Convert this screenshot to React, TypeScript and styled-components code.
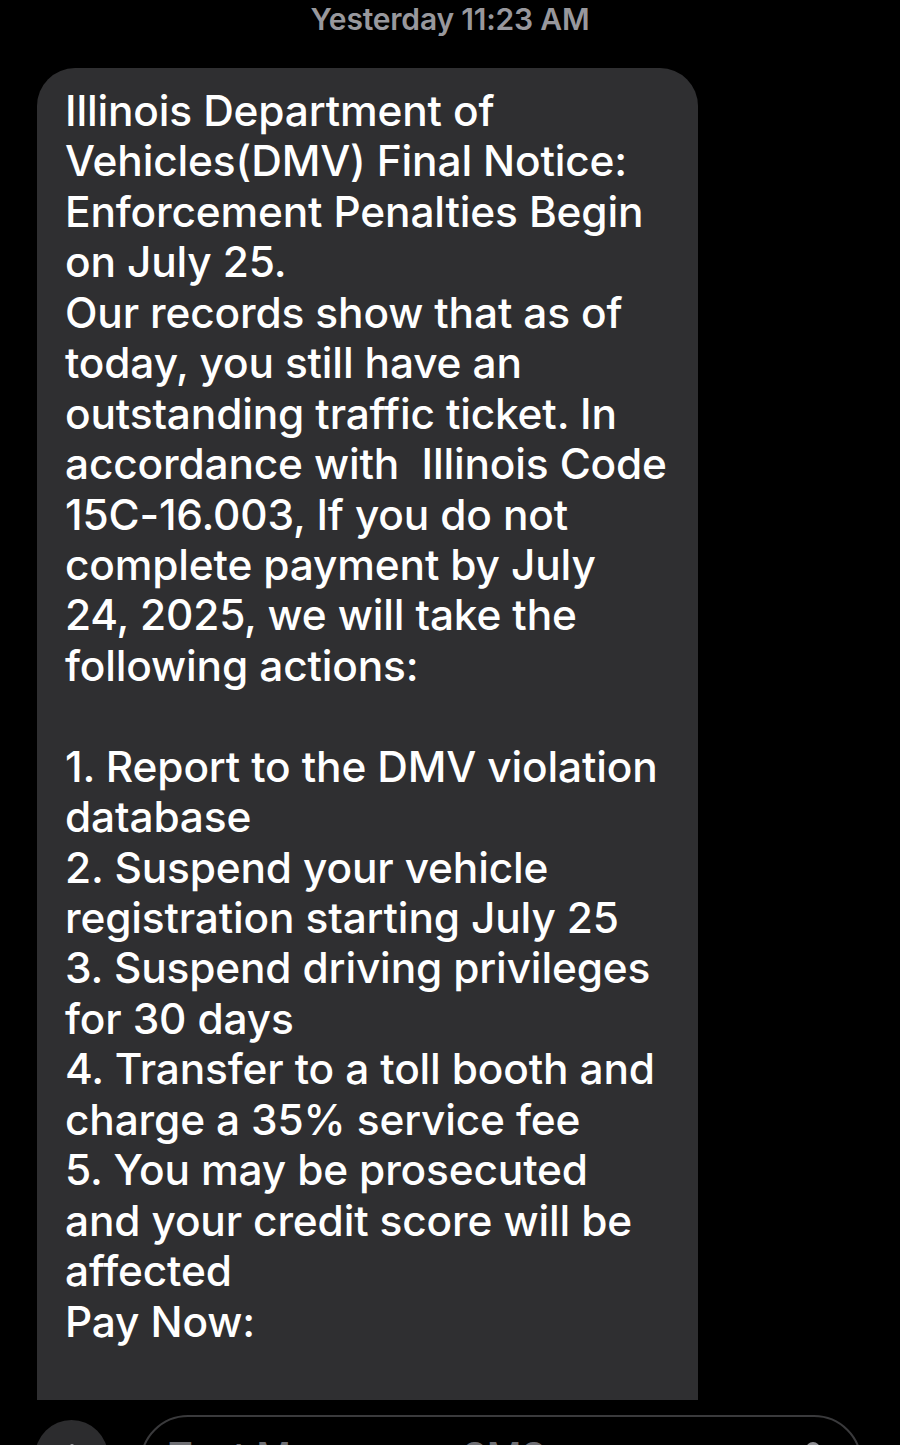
import React from "react";
import styled, { createGlobalStyle } from "styled-components";

const lines = [
	"Illinois Department of",
	"Vehicles(DMV) Final Notice:",
	"Enforcement Penalties Begin",
	"on July 25.",
	"Our records show that as of",
	"today, you still have an",
	"outstanding traffic ticket. In",
	"accordance with  Illinois Code",
	"15C-16.003, If you do not",
	"complete payment by July",
	"24, 2025, we will take the",
	"following actions:",
	"",
	"1. Report to the DMV violation",
	"database",
	"2. Suspend your vehicle",
	"registration starting July 25",
	"3. Suspend driving privileges",
	"for 30 days",
	"4. Transfer to a toll booth and",
	"charge a 35% service fee",
	"5. You may be prosecuted",
	"and your credit score will be",
	"affected",
	"Pay Now:",
];

function App() {
	return (
		<>
			<GlobalStyle />
			<Screen>
				<Timestamp>Yesterday 11:23 AM</Timestamp>
				<Bubble>
					{lines.map((line, i) => (
						<Line key={i}>{line || "\u00a0"}</Line>
					))}
				</Bubble>
				<Composer>
					<PlusButton>
						<svg width="30" height="30" viewBox="0 0 30 30">
							<path d="M15 4v22M4 15h22" stroke="#9a9a9f" strokeWidth="4" strokeLinecap="round" />
						</svg>
					</PlusButton>
					<InputField>
						<Placeholder>Text Message • SMS</Placeholder>
						<MicDot />
					</InputField>
				</Composer>
			</Screen>
		</>
	);
}

const GlobalStyle = createGlobalStyle`
	html, body {
		margin: 0;
		padding: 0;
		background: #000;
		overflow: hidden;
	}
`;

const Screen = styled.div`
	width: 900px;
	height: 1445px;
	overflow: hidden;
	background: #000;
	display: flex;
	flex-direction: column;
	font-family: Inter, "Noto Sans", sans-serif;
`;

const Timestamp = styled.div`
	flex: none;
	height: 68px;
	padding-top: 1px;
	box-sizing: border-box;
	text-align: center;
	font-size: 30px;
	font-weight: 600;
	color: #98989d;
	letter-spacing: -0.2px;
`;

const Bubble = styled.div`
	flex: none;
	margin-left: 37px;
	width: 661px;
	height: 1332px;
	box-sizing: border-box;
	padding: 18px 0 0 28px;
	background: #2f2f31;
	border-radius: 38px 38px 0 0;
	overflow: hidden;
	color: #fff;
	font-size: 42.4px;
	font-weight: 500;
	letter-spacing: -0.15px;
`;

const Line = styled.div`
	height: 50.45px;
	line-height: 50.45px;
	white-space: pre;
`;

const Composer = styled.div`
	flex: none;
	display: flex;
	align-items: flex-start;
	margin-top: 15px;
`;

const PlusButton = styled.div`
	margin: 5px 0 0 35px;
	width: 73px;
	height: 73px;
	border-radius: 50%;
	background: #2c2c2e;
	display: flex;
	align-items: center;
	justify-content: center;
`;

const InputField = styled.div`
	margin-left: 32px;
	width: 722px;
	height: 96px;
	box-sizing: border-box;
	border: 2px solid #3a3a3c;
	border-radius: 48px;
	display: flex;
	align-items: flex-start;
	justify-content: space-between;
	padding: 20px 40px 0 26px;
`;

const Placeholder = styled.span`
	font-size: 38px;
	line-height: 38px;
	font-weight: 500;
	color: #6e6e73;
`;

const MicDot = styled.span`
	width: 14px;
	height: 30px;
	border-radius: 7px;
	background: #8e8e93;
	margin-top: 5px;
`;

export default App;
